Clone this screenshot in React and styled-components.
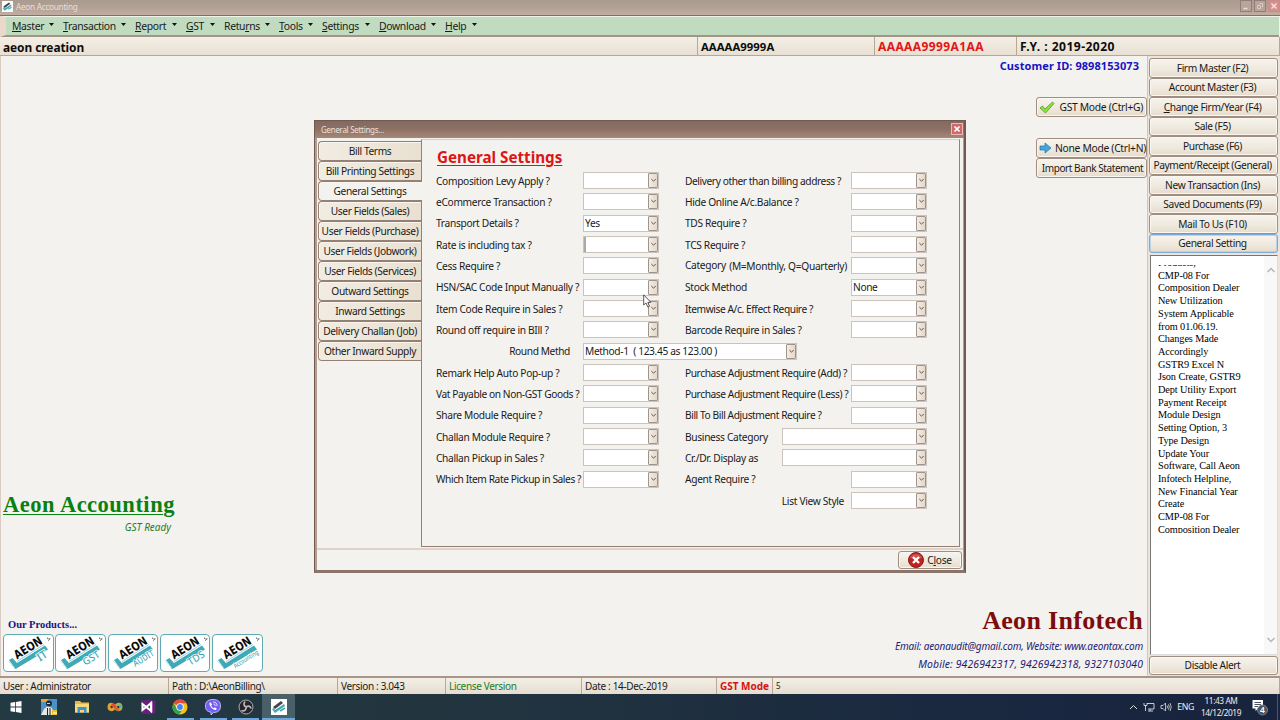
import React from "react";
import styled, { createGlobalStyle, css } from "styled-components";

const menus = [
    { name: "Master", key: 0, width: 51 },
    { name: "Transaction", key: 0, width: 72 },
    { name: "Report", key: 0, width: 51 },
    { name: "GST", key: 0, width: 38 },
    { name: "Returns", key: 4, width: 55 },
    { name: "Tools", key: 0, width: 43 },
    { name: "Settings", key: 0, width: 57 },
    { name: "Download", key: 0, width: 66 },
    { name: "Help", key: 0, width: 41 },
];

const shortcuts = [
    "Firm Master (F2)",
    "Account Master (F3)",
    "Change Firm/Year (F4)",
    "Sale (F5)",
    "Purchase (F6)",
    "Payment/Receipt (General)",
    "New Transaction (Ins)",
    "Saved Documents (F9)",
    "Mail To Us (F10)",
    "General Setting",
];

const news = [
    "Products,",
    "CMP-08 For",
    "Composition Dealer",
    "New Utilization",
    "System Applicable",
    "from 01.06.19.",
    "Changes Made",
    "Accordingly",
    "GSTR9 Excel N",
    "Json Create, GSTR9",
    "Dept Utility Export",
    "Payment Receipt",
    "Module Design",
    "Setting Option, 3",
    "Type Design",
    "Update Your",
    "Software, Call Aeon",
    "Infotech Helpline,",
    "New Financial Year",
    "Create",
    "CMP-08 For",
    "Composition Dealer",
];

const tabs = [
    "Bill Terms",
    "Bill Printing Settings",
    "General Settings",
    "User Fields (Sales)",
    "User Fields (Purchase)",
    "User Fields (Jobwork)",
    "User Fields (Services)",
    "Outward Settings",
    "Inward Settings",
    "Delivery Challan (Job)",
    "Other Inward Supply",
];

const leftTop = [
    { label: "Composition Levy Apply ?" },
    { label: "eCommerce Transaction ?" },
    { label: "Transport Details ?", value: "Yes" },
    { label: "Rate is including tax ?", focused: true },
    { label: "Cess Require ?" },
    { label: "HSN/SAC Code Input Manually ?" },
    { label: "Item Code Require in Sales ?" },
    { label: "Round off require in BIll ?" },
];

const rightTop = [
    { label: "Delivery other than billing address ?" },
    { label: "Hide Online A/c.Balance ?" },
    { label: "TDS Require ?" },
    { label: "TCS Require ?" },
    { label: "Category", note: "(M=Monthly, Q=Quarterly)" },
    { label: "Stock Method", value: "None" },
    { label: "Itemwise A/c. Effect Require ?" },
    { label: "Barcode Require in Sales ?" },
];

const leftBottom = [
    { label: "Remark Help Auto Pop-up ?" },
    { label: "Vat Payable on Non-GST Goods ?" },
    { label: "Share Module Require ?" },
    { label: "Challan Module Require ?" },
    { label: "Challan Pickup in Sales ?" },
    { label: "Which Item Rate Pickup in Sales ?" },
];

const rightBottom = [
    { label: "Purchase Adjustment Require (Add) ?" },
    { label: "Purchase Adjustment Require (Less) ?" },
    { label: "Bill To Bill Adjustment Require ?" },
    { label: "Business Category", width: 145 },
    { label: "Cr./Dr. Display as", width: 145 },
    { label: "Agent Require ?" },
    { label: "List View Style", end: true },
];

const products = [
    { name: "IT", size: 11, length: 10, x: 40, y: 24 },
    { name: "GST", size: 10, length: 18, x: 37, y: 26 },
    { name: "AUDIT", size: 9, length: 23, x: 36, y: 26 },
    { name: "TDS", size: 10, length: 18, x: 37, y: 26 },
    { name: "Accounting", size: 6.5, length: 28, x: 34, y: 26 },
];

const AeonMark = ({ size }) => (
    <svg width={size} height={size} viewBox="0 0 16 16">
        <rect width="16" height="16" fill="#fff" />
        <path d="M2 8 L10 2 L12 4 L4 10Z" fill="#444" />
        <path d="M1 10 L3 9 L4 11 L13 5 L14 7 L4 14Z" fill="#3fa9b5" />
        <path d="M9 12 L14 9" stroke="#3fa9b5" strokeWidth="1.6" />
    </svg>
);

const ProductLogo = ({ name, size, length, x, y }) => (
    <svg width="49" height="36" viewBox="0 0 49 36" overflow="visible">
        <path d="M5 25 L8.500 23 L13 28 L41 10.500 L44 14.500 L11.500 34Z" fill="#3fa9b5" />
        <path d="M4 25.500 L11 34" stroke="#7cc4cc" strokeWidth=".8" strokeDasharray="1 1" />
        <path d="M13 26.500 L40 9.500" stroke="#65b9c2" strokeWidth=".7" />
        <path d="M43 3 L46 4 M44 5.500 L47 3.500" stroke="#333" strokeWidth="1" strokeDasharray="1 .8" />
        <text
            x="13" y="24.500" fontSize="12" fontWeight="700" fill="#0b0b0b"
            textLength="31" lengthAdjust="spacingAndGlyphs"
            transform="rotate(-32 13 24.500)" fontFamily="DejaVu Sans, sans-serif"
        >AEON</text>
        <text
            x={x} y={y} fontSize={size} fontWeight="500" fill="#3fa9b5" textAnchor="middle"
            textLength={length} lengthAdjust="spacingAndGlyphs"
            stroke="#fff" strokeWidth="1.4" paintOrder="stroke"
            transform={`rotate(-32 ${x} ${y})`} fontFamily="Noto Sans, sans-serif"
        >{name}</text>
    </svg>
);

const Combo = ({ width = 76, value, focused }) => (
    <ComboBox $width={width}>
        <ComboText $focused={focused}>{value}</ComboText>
        <ComboArrow>
            <svg width="7" height="5" viewBox="0 0 7 5">
                <path d="M1.300 1 L3.500 3.200 L5.700 1" fill="none" stroke="#66584f" strokeWidth="1" />
            </svg>
        </ComboArrow>
    </ComboBox>
);

const Fields = ({ fields }) => (
    <FieldColumn>
        {fields.map((field) => (
            <FieldRow key={field.label}>
                <Label $end={field.end} $note={!!field.note} $long={field.label.length > 29}>{field.label}</Label>
                {field.note && <Note>{field.note}</Note>}
                <Combo width={field.width} value={field.value} focused={field.focused} />
            </FieldRow>
        ))}
    </FieldColumn>
);

const SettingsDialog = () => (
    <Dialog>
        <DialogTitle>
            <span>General Settings...</span>
            <DialogX>
                <svg width="10" height="10" viewBox="0 0 10 10">
                    <path d="M2.500 2.500 L7.500 7.500 M7.500 2.500 L2.500 7.500" stroke="#fff" strokeWidth="1.700" />
                </svg>
            </DialogX>
        </DialogTitle>
        <DialogBody>
            <TabList>
                {tabs.map((tab) => (
                    <Tab key={tab} $active={tab === "General Settings"}>{tab}</Tab>
                ))}
            </TabList>
            <Panel>
                <h1>General Settings</h1>
                <Columns>
                    <Fields fields={leftTop} />
                    <Fields fields={rightTop} />
                </Columns>
                <RoundRow>
                    <span>Round Methd</span>
                    <Combo width={214} value="Method-1  ( 123.45 as 123.00 )" />
                </RoundRow>
                <Columns>
                    <Fields fields={leftBottom} />
                    <Fields fields={rightBottom} />
                </Columns>
            </Panel>
        </DialogBody>
        <DialogFooter>
            <CloseButton>
                <svg width="16" height="16" viewBox="0 0 16 16">
                    <circle cx="8" cy="8" r="7.500" fill="#c3201f" stroke="#7f2422" />
                    <path d="M2 6 A6.500 6.500 0 0 1 14 6 Q8 8 2 6Z" fill="#e0736f" opacity=".6" />
                    <path d="M5 5 L11 11 M11 5 L5 11" stroke="#fff" strokeWidth="2.400" />
                </svg>
                <span>C<u>l</u>ose</span>
            </CloseButton>
        </DialogFooter>
        <Pointer width="9" height="14" viewBox="0 0 9 14">
            <path d="M.7 .8 V11 L3 9 L4.800 13 L6.500 12.300 L4.800 8.400 H7.900Z" fill="#fff" stroke="#333" strokeWidth=".8" />
        </Pointer>
    </Dialog>
);

const taskIcons = [
    {
        id: "start",
        art: <path d="M3.500 4.700 L8 4 V8.600 H3.500Z M8.800 3.900 L14.500 3 V8.600 H8.800Z M3.500 9.400 H8 V14 L3.500 13.300Z M8.800 9.400 H14.500 V15 L8.800 14.100Z" fill="#fff" />,
    },
    {
        id: "game",
        art: <>
            <rect x="1" y="1" width="16" height="16" fill="#4b91c6" />
            <path d="M1 1 H9 L6 4 H1Z" fill="#e9a51d" />
            <path d="M1 17 L4 11 L8 8 L12 10 L14 17Z" fill="#e8e6e0" />
            <path d="M7.500 10 V17 M10 10 V17" stroke="#222" />
            <circle cx="9" cy="5.500" r="3" fill="#26292e" />
            <path d="M7 5.500 H10" stroke="#c8d4da" />
            <path d="M12 12 H17 V17 H12Z" fill="#eac22e" />
            <path d="M13 15 H17" stroke="#fff" />
        </>,
    },
    {
        id: "explorer",
        art: <>
            <path d="M2 3 H7 L8.500 4.500 H16 V14.500 H2Z" fill="#e9b64c" />
            <path d="M2 6 H16 V14.500 H2Z" fill="#f8d978" />
            <path d="M4.500 9 H13.500 V15 H11 V12 H7 V15 H4.500Z" fill="#3a93d8" />
        </>,
    },
    {
        id: "loop",
        art: <g fill="none" strokeWidth="3">
            <path d="M9 9 C7 5.500 3 5 3 9 C3 12.500 7 12.500 9 9" stroke="#e6a02f" />
            <path d="M9 9 C11 5.500 15 5 15 9 C15 12.500 11 12.500 9 9" stroke="#9fb64a" />
            <path d="M5.500 6.300 Q8 7 9.500 9.500" stroke="#e2483d" />
            <path d="M9.500 9.500 Q11 12 13 11.500" stroke="#d9622f" />
            <circle cx="14.500" cy="8" r="1.200" fill="#55a8dd" stroke="none" />
        </g>,
    },
    {
        id: "studio",
        art: <>
            <path d="M2 2.500 L12 1.500 L16.500 3 V15 L12 16.500 L2 15.500Z" fill="#68217a" />
            <path d="M3.500 6 L12 12.800 V5.200 L3.500 12Z" fill="none" stroke="#fff" strokeWidth="2" />
            <path d="M12.500 3.500 V14.500" stroke="#fff" strokeWidth="1.600" />
        </>,
    },
    {
        id: "chrome",
        running: true,
        art: <>
            <circle cx="9" cy="9" r="7.500" fill="#fbc116" />
            <path d="M9 9 L2.500 5.200 A7.500 7.500 0 0 1 15.500 5.200 L9 5.500Z" fill="#e64a3c" />
            <path d="M2.500 5.200 A7.500 7.500 0 0 0 8 16.400 L12 10.700 L6 10.700Z" fill="#2da44e" />
            <circle cx="9" cy="9" r="3.700" fill="#fff" />
            <circle cx="9" cy="9" r="2.900" fill="#4285f4" />
        </>,
    },
    {
        id: "viber",
        running: true,
        art: <>
            <path d="M9 1.500 C14 1.500 16.500 3.500 16.500 8 C16.500 12.500 14 14.500 9.500 14.500 L7 17 V14.200 C3 13.500 1.500 12 1.500 8 C1.500 3.500 4 1.500 9 1.500Z" fill="#7360f2" stroke="#d8d2ff" strokeWidth=".8" />
            <path d="M5.500 5 L6.700 4.300 L8 6.500 L7.200 7.500 C7.700 9 8.500 9.700 9.800 10.200 L10.800 9.300 L12.800 10.800 L12 12 C9.500 12.800 4.700 7.500 5.500 5Z" fill="#fff" />
            <path d="M9.300 4 C12 4 13 5.500 13 8 M9.500 6 C10.700 6 11.200 6.700 11.200 8" fill="none" stroke="#fff" strokeWidth=".8" />
        </>,
    },
    {
        id: "obs",
        running: true,
        art: <>
            <circle cx="9" cy="9" r="7" fill="#26242a" stroke="#b9b9bb" strokeWidth=".9" />
            <g fill="none" stroke="#b9b9bb" strokeWidth="1.700">
                <path d="M8 3.500 C6 6 7 8.500 9.500 8.800" />
                <path d="M14.200 10.500 C13 7.500 10.300 7.500 9 9.500" />
                <path d="M4.500 12.500 C7.500 13.500 9.500 11.500 9 9.200" />
            </g>
        </>,
    },
    { id: "aeon", running: true, active: true, art: null },
];

const App = () => (
    <Screen>
        <GlobalStyle />
        <TitleBar>
            <AeonMark size={11} />
            <span>Aeon Accounting</span>
            <WindowButtons>
                <WindowButton>
                    <svg width="10" height="10"><path d="M2.500 7.500 H6.500" stroke="#e7dcd6" strokeWidth="1.500" /></svg>
                </WindowButton>
                <WindowButton>
                    <svg width="10" height="10"><path d="M4.500 2.500 H7.500 V6 M2.500 4.500 H5.500 V7.500 H2.500Z" fill="none" stroke="#d9ccc5" /></svg>
                </WindowButton>
                <WindowButton $danger>
                    <svg width="10" height="10"><path d="M2.500 2.500 L7.500 7.500 M7.500 2.500 L2.500 7.500" stroke="#fbe4e2" strokeWidth="1.400" /></svg>
                </WindowButton>
            </WindowButtons>
        </TitleBar>
        <MenuBar>
            {menus.map(({ name, key, width }) => (
                <MenuItem key={name} $width={width}>
                    <span>{name.slice(0, key)}<u>{name[key]}</u>{name.slice(key + 1)}</span>
                    <svg width="5" height="3"><path d="M0 0 H5 L2.500 3Z" fill="#111" /></svg>
                </MenuItem>
            ))}
        </MenuBar>
        <InfoBar>
            <InfoCell $width={698} $size={11.9} $spacing={-0.05}>aeon creation</InfoCell>
            <InfoCell $width={177} $size={11.3} $spacing={0.05}>AAAAA9999A</InfoCell>
            <InfoCell $width={142} $size={12} $spacing={0.4} $red>AAAAA9999A1AA</InfoCell>
            <InfoCell $width={263} $size={12.1} $spacing={0.45}>F.Y. : 2019-2020</InfoCell>
        </InfoBar>
        <Workspace>
            <Desktop>
                <Branding>
                    <AppName>Aeon Accounting</AppName>
                    <Ready>GST Ready</Ready>
                    <ProductsTitle>Our Products...</ProductsTitle>
                    <ProductList>
                        {products.map((product) => (
                            <Product key={product.name}><ProductLogo {...product} /></Product>
                        ))}
                    </ProductList>
                </Branding>
                <Company>
                    <CustomerId>Customer ID: 9898153073</CustomerId>
                    <ModeButtons>
                        <ModeButton $gap={20.5}>
                            <svg width="16" height="13" viewBox="0 0 16 13">
                                <path d="M1 7 L3.500 5 L6 8 L13.500 1 L15 2.500 L6.500 12Z" fill="#8ce03f" stroke="#4c9d26" strokeWidth=".8" />
                            </svg>
                            <span>GST Mode (Ctrl+G)</span>
                        </ModeButton>
                        <ModeButton>
                            <svg width="13" height="12" viewBox="0 0 13 12">
                                <path d="M1 4 H6 V1 L12 6 L6 11 V8 H1Z" fill="#42a5dc" stroke="#2275a6" strokeWidth=".7" />
                            </svg>
                            <span>None Mode (Ctrl+N)</span>
                        </ModeButton>
                        <ModeButton $center><span>Import Bank Statement</span></ModeButton>
                    </ModeButtons>
                    <Contact>
                        <h2>Aeon Infotech</h2>
                        <ContactLine $size={10} $spacing={-0.16}>Email: aeonaudit@gmail.com, Website: www.aeontax.com</ContactLine>
                        <ContactLine $size={10.4} $spacing={0.14}>Mobile: 9426942317, 9426942318, 9327103040</ContactLine>
                    </Contact>
                </Company>
            </Desktop>
            <Sidebar>
                {shortcuts.map((name) => (
                    <SideButton key={name} $focused={name === "General Setting"}>
                        {name.startsWith("Change") ? <span><u>C</u>{name.slice(1)}</span> : name}
                    </SideButton>
                ))}
                <NewsBox>
                    <NewsText>
                        {news.map((line, i) => <div key={i}>{line}</div>)}
                    </NewsText>
                    <Scroll>
                        <svg width="8" height="6"><path d="M.5 5 L4 1.500 L7.500 5" fill="none" stroke="#b5b5b5" strokeWidth="1.500" /></svg>
                        <svg width="8" height="6"><path d="M.5 1 L4 4.500 L7.500 1" fill="none" stroke="#b5b5b5" strokeWidth="1.500" /></svg>
                    </Scroll>
                </NewsBox>
                <SideButton>Disable Alert</SideButton>
            </Sidebar>
        </Workspace>
        <StatusBar>
            <Status $width={169}>User : Administrator</Status>
            <Status $width={169}>Path : D:\AeonBilling\</Status>
            <Status $width={108}>Version : 3.043</Status>
            <Status $width={136} $color="#1d7d22">License Version</Status>
            <Status $width={135}>Date : 14-Dec-2019</Status>
            <Status $width={56} $color="#d31414" $bold>GST Mode</Status>
            <Status $width={507} $small>5</Status>
        </StatusBar>
        <Taskbar>
            {taskIcons.map(({ id, running, active, art }) => (
                <Task key={id} $running={running} $active={active}>
                    {art ? <svg width="18" height="18" viewBox="0 0 18 18">{art}</svg> : <AeonMark size={16} />}
                </Task>
            ))}
            <Tray>
                <svg width="9" height="6"><path d="M1 5 L4.500 1.500 L8 5" fill="none" stroke="#ddd" /></svg>
                <svg width="12" height="10" viewBox="0 0 12 10">
                    <path d="M4 1.500 H11 V7 H5 M7 7 V9 M5 9 H10 M1 1 V3.500 H4 V1 M2.500 3.500 V9" fill="none" stroke="#ddd" strokeWidth=".9" />
                </svg>
                <svg width="12" height="10" viewBox="0 0 12 10">
                    <path d="M1 3.500 H3 L5.500 1 V9 L3 6.500 H1Z M7 3.500 Q8 5 7 6.500 M8.500 2.300 Q10 5 8.500 7.700 M10 1 Q12.500 5 10 9" fill="none" stroke="#ddd" strokeWidth=".8" />
                </svg>
                <span>ENG</span>
                <Clock>
                    <div>11:43 AM</div>
                    <div>14/12/2019</div>
                </Clock>
                <Notifications width="18" height="18" viewBox="0 0 18 18">
                    <path d="M1.500 2 H12 V10.500 H7 L4.500 13 V10.500 H1.500Z" fill="#fff" />
                    <path d="M3.500 4.500 H10 M3.500 6.500 H10 M3.500 8.500 H7" stroke="#1a2840" strokeWidth=".8" />
                    <circle cx="11.500" cy="12" r="5" fill="#4a5158" stroke="#8a9098" strokeWidth=".8" />
                    <text x="11.500" y="15" fontSize="8.500" fontWeight="600" textAnchor="middle" fill="#fff" fontFamily="Noto Sans, sans-serif">4</text>
                </Notifications>
                <TrayEdge />
            </Tray>
        </Taskbar>
        <SettingsDialog />
    </Screen>
);
export default App;

const GlobalStyle = createGlobalStyle`
    *{
        box-sizing: border-box;
    }
    body{
        margin: 0;
        overflow: hidden;
    }
    svg{
        display: block;
        flex: none;
        letter-spacing: 0;
    }
    h1, h2{
        margin: 0;
    }
`

const raised = css`
    background: linear-gradient(#f7f4ee, #efe9de 55%, #e6dccd);
    border: 1px solid #a18e83;
    border-radius: 3px;
    box-shadow: inset 0 0 0 1px #faf7f1;
`

const Screen = styled.div`
    position: relative;
    width: 1280px;
    height: 720px;
    display: flex;
    flex-direction: column;
    overflow: hidden;
    background: #f4f2ef;
    color: #1a1a1a;
    font: 10.2px "Noto Sans", "Open Sans", sans-serif;
    letter-spacing: -0.3px;
    white-space: pre;
`

const TitleBar = styled.div`
    height: 16px;
    flex: none;
    display: flex;
    align-items: center;
    gap: 3px;
    padding: 0 0 3px 2px;
    background: linear-gradient(#a99b90, #b1a094 45%, #c2ada3);
    border-bottom: 1px solid #8f6d5c;
    color: #e9dfd8;
    font-size: 8.2px;
    letter-spacing: -0.25px;
`

const WindowButtons = styled.div`
    margin-left: auto;
    display: flex;
    gap: 2px;
`

const WindowButton = styled.div`
    width: 12px;
    height: 12px;
    border: 1px solid ${({ $danger }) => $danger ? "#c98d89" : "#917e76"};
    background: ${({ $danger }) => $danger ? "#d4908e" : "#b8a49a"};
`

const MenuBar = styled.div`
    height: 21px;
    flex: none;
    display: flex;
    align-items: center;
    padding: 0 0 1px 6px;
    margin-right: 1px;
    border-left: 6px solid #ead9cb;
    border-top: 1px solid #eef5e8;
    border-bottom: 2px solid #a39485;
    background: #c1dbc1;
`

const MenuItem = styled.div`
    display: flex;
    align-items: center;
    justify-content: space-between;
    width: ${({ $width }) => $width}px;
    padding-right: 9px;
    font-size: 10.4px;
    letter-spacing: -0.33px;

    svg{
        margin-top: -2px;
    }
`

const InfoBar = styled.div`
    height: 19px;
    flex: none;
    display: flex;
`

const InfoCell = styled.div`
    width: ${({ $width }) => $width}px;
    height: 19px;
    padding-left: 3px;
    line-height: 20px;
    font-size: ${({ $size }) => $size}px;
    letter-spacing: ${({ $spacing }) => $spacing}px;
    font-weight: bold;
    color: ${({ $red }) => $red ? "#e01818" : "#0c0c0c"};
    background: linear-gradient(#f3efe6, #e9e0d3);
    border-right: 1px solid #b8a69a;
    border-bottom: 1px solid #b8a69a;
`

const Workspace = styled.div`
    height: 620px;
    flex: none;
    display: flex;
`

const Desktop = styled.div`
    width: 1147px;
    display: flex;
    justify-content: space-between;
    border-left: 1px solid #d9ccc2;
`

const Branding = styled.div`
    display: flex;
    flex-direction: column;
    justify-content: flex-end;
    padding: 0 0 4px 2px;
`

const AppName = styled.div`
    width: 174px;
    height: 27px;
    color: #0a800f;
    font: bold 22.5px/26px "Liberation Serif", serif;
    letter-spacing: 0.5px;
    text-decoration: underline;
    text-decoration-thickness: 1px;
    text-underline-offset: 2px;
`

const Ready = styled.div`
    width: 168px;
    height: 98px;
    padding-top: 1px;
    text-align: right;
    font-size: 10px;
    font-style: italic;
    letter-spacing: 0;
    color: #1f7d26;
`

const ProductsTitle = styled.div`
    padding-left: 5px;
    height: 17px;
    color: #1b1280;
    font: bold 10.5px/15px "Liberation Serif", serif;
    letter-spacing: 0;
`

const ProductList = styled.div`
    display: flex;
    gap: 1.8px;
`

const Product = styled.div`
    width: 50.5px;
    height: 38px;
    background: #fff;
    border: 1px solid #5faab4;
    border-radius: 4px;
`

const Company = styled.div`
    display: flex;
    flex-direction: column;
    align-items: flex-end;
`

const CustomerId = styled.div`
    height: 41px;
    padding: 2px 8px 0 0;
    font-size: 11px;
    letter-spacing: 0.07px;
    font-weight: bold;
    color: #1515c0;
`

const ModeButtons = styled.div`
    width: 111px;
    display: flex;
    flex-direction: column;
    font-size: 10.3px;
`

const ModeButton = styled.div`
    ${raised}
    height: 20px;
    margin-bottom: ${({ $gap }) => $gap || 0}px;
    display: flex;
    align-items: center;
    justify-content: ${({ $center }) => $center ? "center" : "space-between"};
    padding: 0 ${({ $center }) => $center ? 0 : 3}px 0 2px;
    ${({ $center }) => $center && "font-size: 10px; letter-spacing: -0.42px;"}

    &:nth-child(2){
        padding-right: 0;
    }
`

const Contact = styled.div`
    margin-top: auto;
    padding: 0 4px 3px 0;
    text-align: right;

    h2{
        color: #7d0c0c;
        font: bold 26px/30px "Liberation Serif", serif;
        letter-spacing: 0.32px;
        margin-bottom: 1px;
    }
`

const ContactLine = styled.div`
    height: 18px;
    line-height: 18px;
    font-style: italic;
    font-size: ${({ $size }) => $size}px;
    letter-spacing: ${({ $spacing }) => $spacing}px;
    color: #1c1c74;
`

const Sidebar = styled.div`
    width: 133px;
    display: flex;
    flex-direction: column;
    padding: 2px 2px 1px 1px;
    border-left: 1px solid #d3c5ba;
    background: #ece4da;
    letter-spacing: -0.38px;
`

const SideButton = styled.div`
    ${raised}
    height: 19.5px;
    flex: none;
    display: flex;
    align-items: center;
    justify-content: center;
    padding-right: 2px;
    ${({ $focused }) => $focused && "border-color: #7fa9d6; box-shadow: inset 0 0 0 1px #b4d4ef;"}
`

const NewsBox = styled.div`
    flex: 1;
    margin: 2px 0 1px 1px;
    display: flex;
    justify-content: space-between;
    background: #fff;
    border: 1px solid #777;
    border-right-color: #ddd;
    border-bottom-color: #ddd;
`

const NewsText = styled.div`
    height: 268px;
    margin-top: 9px;
    padding-left: 7px;
    overflow: hidden;
    color: #000;
    font: 10.3px/12.7px "Liberation Serif", serif;
    letter-spacing: -0.1px;

    div:first-child{
        margin-top: -8px;
    }
`

const Scroll = styled.div`
    width: 13px;
    display: flex;
    flex-direction: column;
    align-items: center;
    justify-content: space-between;
    padding: 11px 0;
    background: #f8f8f8;
`

const StatusBar = styled.div`
    height: 18px;
    flex: none;
    display: flex;
    border-top: 2px solid #a8968a;
    background: #efe8dd;
`

const Status = styled.div`
    width: ${({ $width }) => $width}px;
    padding-left: 3px;
    line-height: 16px;
    color: ${({ $color }) => $color || "#1a1a1a"};
    font-weight: ${({ $bold }) => $bold ? "bold" : "normal"};
    font-size: ${({ $small }) => $small ? "8px" : "10px"};
    letter-spacing: ${({ $bold }) => $bold ? 0 : -0.34}px;
    background: linear-gradient(#f3efe6, #e6dccf);
    border-right: 1px solid #b8a69a;
`

const Taskbar = styled.div`
    height: 26px;
    flex: none;
    display: flex;
    background: linear-gradient(90deg, #233a43, #22353f 35%, #1a2840 75%, #18233d);
`

const Task = styled.div`
    width: 32.8px;
    height: 26px;
    display: flex;
    align-items: center;
    justify-content: center;
    background: ${({ $active }) => $active ? "#4a6069" : "transparent"};

    ${({ $running, $active }) => $running && css`
        background-image: linear-gradient(#6ba7dd, #6ba7dd);
        background-size: ${$active ? "100%" : "27px"} 2px;
        background-position: bottom center;
        background-repeat: no-repeat;
    `}
`

const Tray = styled.div`
    margin-left: auto;
    display: flex;
    align-items: center;
    gap: 5px;
    color: #eee;
    font-size: 8.7px;
`

const Clock = styled.div`
    width: 44px;
    margin-right: 3px;
    text-align: center;
    font-size: 8.3px;
    letter-spacing: -0.4px;
    line-height: 12px;
`

const Notifications = styled.svg`
    margin-right: 3px;
`

const TrayEdge = styled.div`
    width: 3px;
    height: 26px;
    border-left: 1px solid #4a566b;
`

const Dialog = styled.div`
    position: absolute;
    left: 314px;
    top: 120px;
    width: 652px;
    height: 453px;
    display: flex;
    flex-direction: column;
    border: 1px solid #715a50;
    border-right-width: 2px;
    border-bottom: 3px solid #8b7469;
    background: #f4f2ef;
    box-shadow: inset 2px 0 0 #b39c90, inset -1px 0 0 #b39c90;
`

const DialogTitle = styled.div`
    height: 17px;
    flex: none;
    display: flex;
    align-items: center;
    justify-content: space-between;
    padding: 0 1px 1px 6px;
    background: linear-gradient(#826a60, #8e7165 50%, #a68878);
    color: #eee3dc;
    font-size: 8px;
`

const DialogX = styled.div`
    width: 12px;
    height: 12px;
    background: #d3686b;
    border: 1px solid #efb7b5;
`

const DialogBody = styled.div`
    height: 412px;
    flex: none;
    display: flex;
    margin: 0 1px 0 2px;
    padding: 1px 3px 1px 1px;
    border-bottom: 2px solid #dfd2c8;
`

const TabList = styled.div`
    width: 103px;
    flex: none;
    padding-top: 2px;
    letter-spacing: -0.38px;
`

const Tab = styled.div`
    height: 20px;
    line-height: 19px;
    text-align: center;
    border: 1px solid #958074;
    border-width: 1px 0 1px 1px;
    border-radius: 4px 0 0 4px;
    background: linear-gradient(90deg, #f1ece2, #e9e0d0);
    box-shadow: inset 1px 1px 0 #faf6ef;
    ${({ $active }) => $active && `
        position: relative;
        margin-right: -1px;
        background: #f4f2ef;
        padding-right: 1px;
    `}
`

const Panel = styled.div`
    flex: 1;
    padding: 5px 0 0 14px;
    border: 1px solid #958074;
    border-top-color: #d9cfc6;

    h1{
        height: 25px;
        padding-left: 1px;
        color: #da1616;
        font-size: 15.2px;
        line-height: 24px;
        letter-spacing: 0;
        text-decoration: underline;
        text-decoration-thickness: 1px;
        text-underline-offset: 2px;
    }
`

const Columns = styled.div`
    display: grid;
    grid-template-columns: 223px 242px;
    column-gap: 26px;
    align-items: start;
`

const FieldColumn = styled.div`
    display: flex;
    flex-direction: column;
`

const FieldRow = styled.div`
    height: 21.33px;
    display: flex;
    align-items: center;
`

const Label = styled.span`
    flex: 1 1 0;
    min-width: 0;
    letter-spacing: ${({ $long }) => $long ? -0.42 : -0.32}px;
    ${({ $end }) => $end && "text-align: right; padding-right: 7px;"}
    ${({ $note }) => $note && "padding-bottom: 2px;"}
`

const Note = styled.span`
    padding: 1px 4px 0 0;
`

const RoundRow = styled.div`
    height: 21.33px;
    display: flex;
    align-items: center;

    > span{
        width: 134px;
        margin-right: 13px;
        text-align: right;
        letter-spacing: -0.4px;
    }
`

const ComboBox = styled.div`
    width: ${({ $width }) => $width}px;
    height: 17px;
    flex: none;
    display: flex;
    align-items: center;
    justify-content: space-between;
    background: #fff;
    border: 1px solid #cbc3bc;
`

const ComboText = styled.span`
    height: 15px;
    line-height: 14px;
    padding-left: 1px;
    letter-spacing: -0.36px;
    ${({ $focused }) => $focused && "border-left: 2px solid #aaa;"}
`

const ComboArrow = styled.div`
    width: 10px;
    height: 15px;
    display: flex;
    align-items: center;
    justify-content: center;
    background: linear-gradient(90deg, #f3ede4, #e3d8ca);
    border: 1px solid #a0938a;
    border-radius: 1px;
`

const DialogFooter = styled.div`
    flex: 1;
    display: flex;
    justify-content: flex-end;
    align-items: flex-start;
    padding: 1px 2px 0 0;
`

const CloseButton = styled.div`
    ${raised}
    width: 64px;
    height: 18px;
    display: flex;
    align-items: center;
    justify-content: center;
    gap: 3px;
`

// sits over the field grid
const Pointer = styled.svg`
    position: absolute;
    left: 328px;
    top: 173px;
`
